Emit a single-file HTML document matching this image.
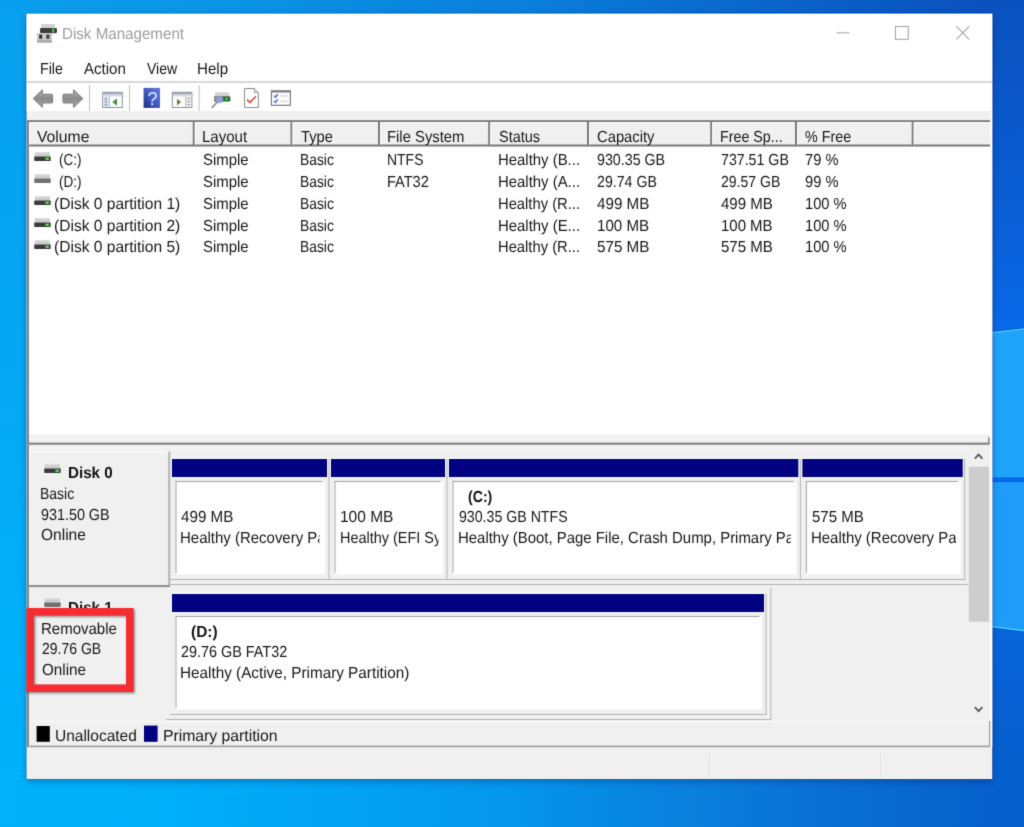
<!DOCTYPE html>
<html lang="en"><head><meta charset="utf-8"><title>Disk Management</title>
<style>
*{box-sizing:border-box;margin:0;padding:0}
html,body{width:1024px;height:827px;overflow:hidden}
body{position:relative;font-family:"Liberation Sans",sans-serif;font-size:16px;color:#161616;background:#0a78d8}
.a,.t{position:absolute}
.t{text-rendering:geometricPrecision;white-space:pre;line-height:18px;height:18px;font-size:16px;transform-origin:0 13px}
.b{font-weight:700}
#app{position:absolute;left:0;top:0;width:1024px;height:827px;filter:url(#soft)}
#win{position:absolute;left:27px;top:14px;width:965px;height:765px;background:#f0f0f0;box-shadow:0 0 0 1px rgba(20,80,150,.28),0 2px 7px rgba(0,30,90,.38)}
</style></head>
<body>
<svg class="a" style="left:0;top:0" width="1024" height="827" viewBox="0 0 1024 827">
<defs>
<linearGradient id="gt" x1="0" y1="0" x2="1" y2="0">
<stop offset="0" stop-color="#0aa0ec"/><stop offset="0.25" stop-color="#0a92e6"/><stop offset="0.5" stop-color="#0a80dc"/><stop offset="0.7" stop-color="#0a6ace"/><stop offset="0.96" stop-color="#0a51be"/><stop offset="1" stop-color="#0a51be"/>
</linearGradient>
<linearGradient id="gb" x1="0" y1="0" x2="1" y2="0">
<stop offset="0" stop-color="#00b2fa"/><stop offset="0.12" stop-color="#00b0f9"/><stop offset="0.3" stop-color="#02a6f4"/><stop offset="0.5" stop-color="#0496ea"/><stop offset="0.7" stop-color="#0a7cda"/><stop offset="0.88" stop-color="#0868ce"/><stop offset="0.97" stop-color="#0660cc"/><stop offset="1" stop-color="#0660cc"/>
</linearGradient>
<linearGradient id="gl" x1="0" y1="0" x2="0" y2="1">
<stop offset="0" stop-color="#08a0ee"/><stop offset="0.5" stop-color="#05a8f3"/><stop offset="0.9" stop-color="#00b1fa"/><stop offset="1" stop-color="#00b2fa"/>
</linearGradient>
<linearGradient id="gr2" x1="0" y1="0" x2="0" y2="1"><stop offset="0" stop-color="#0864dc"/><stop offset="0.5" stop-color="#0760d0"/><stop offset="1" stop-color="#0660cc"/></linearGradient>
<linearGradient id="gr" x1="0" y1="0" x2="0" y2="1">
<stop offset="0" stop-color="#0a51be"/><stop offset="0.6" stop-color="#0a5ed4"/><stop offset="1" stop-color="#0868e8"/>
</linearGradient>
</defs>
<rect width="1024" height="827" fill="#0a80dc"/>
<rect x="0" y="0" width="1024" height="30" fill="url(#gt)"/>
<rect x="0" y="760" width="1024" height="67" fill="url(#gb)"/>
<rect x="0" y="0" width="30" height="780" fill="url(#gl)"/>
<rect x="985" y="0" width="39" height="335" fill="url(#gr)"/>
<polygon points="985,333.6 1024,329 1024,480 985,480" fill="#1fa4fb"/>
<path d="M985 333.6L1024 329" stroke="#3cbcff" stroke-width="1.6" fill="none"/>
<rect x="985" y="477.3" width="39" height="5" fill="#0669ee"/>
<polygon points="985,482.3 1024,482.3 1024,631 985,626" fill="#1f9cf8"/>
<polygon points="985,626 1024,631 1024,827 985,827" fill="url(#gr2)"/>
<path d="M985 625.6L1024 630.6" stroke="#38c0ff" stroke-width="1.6" fill="none"/>
</svg>
<svg width="0" height="0" style="position:absolute"><defs>
<filter id="soft" x="0" y="0" width="100%" height="100%" color-interpolation-filters="sRGB">
<feConvolveMatrix order="3" kernelMatrix="0.0143 0.0910 0.0143 0.0910 0.5785 0.0910 0.0143 0.0910 0.0143" edgeMode="duplicate" preserveAlpha="true"/>
</filter></defs></svg>
<div id="app">
<div id="win"></div>
<svg class="a" style="left:0;top:0" width="1024" height="827" viewBox="0 0 1024 827">
<rect x="26.5" y="13.7" width="965.8" height="765.4" fill="#f0f0f0"/>
<rect x="26.5" y="13.7" width="965.8" height="68" fill="#fff"/>
<rect x="26.5" y="81.3" width="965.8" height="1.5" fill="#c8c8c8"/>
<rect x="26.5" y="82.8" width="965.8" height="28.1" fill="#fff"/>
<rect x="990" y="110.9" width="2.3" height="636" fill="#fbfbfb"/>
<rect x="27" y="120.2" width="963" height="2" fill="#787878"/>
<rect x="27" y="122" width="2" height="322" fill="#858585"/>
<rect x="29" y="146" width="961" height="288" fill="#fff"/>
<rect x="29" y="434" width="961" height="1" fill="#f7f7f7"/>
<rect x="29" y="438" width="959" height="1" fill="#f8f8f8"/>
<rect x="29" y="122" width="961" height="22.5" fill="#f0f0f0"/>
<rect x="29" y="144.5" width="961" height="2" fill="#787878"/>
<rect x="29" y="122.2" width="961" height="1" fill="#fff"/>
<rect x="192.75" y="121" width="2" height="24" fill="#7a7a7a"/>
<rect x="194.75" y="122.2" width="1" height="22.3" fill="#fff"/>
<rect x="290.5" y="121" width="2" height="24" fill="#7a7a7a"/>
<rect x="292.5" y="122.2" width="1" height="22.3" fill="#fff"/>
<rect x="378" y="121" width="2" height="24" fill="#7a7a7a"/>
<rect x="380" y="122.2" width="1" height="22.3" fill="#fff"/>
<rect x="488.25" y="121" width="2" height="24" fill="#7a7a7a"/>
<rect x="490.25" y="122.2" width="1" height="22.3" fill="#fff"/>
<rect x="587" y="121" width="2" height="24" fill="#7a7a7a"/>
<rect x="589" y="122.2" width="1" height="22.3" fill="#fff"/>
<rect x="710.25" y="121" width="2" height="24" fill="#7a7a7a"/>
<rect x="712.25" y="122.2" width="1" height="22.3" fill="#fff"/>
<rect x="795" y="121" width="2" height="24" fill="#7a7a7a"/>
<rect x="797" y="122.2" width="1" height="22.3" fill="#fff"/>
<rect x="911.7" y="121" width="2" height="24" fill="#7a7a7a"/>
<rect x="913.7" y="122.2" width="1" height="22.3" fill="#fff"/>
<rect x="29" y="122.2" width="1" height="22.3" fill="#fff"/>
<rect x="27" y="442.7" width="962.6" height="2" fill="#7c7c7c"/>
<rect x="29" y="447.2" width="939" height="1" fill="#f9f9f9"/>
<rect x="988" y="437.5" width="1.6" height="6" fill="#8a8a8a"/>
<rect x="27" y="444.6" width="2" height="302.5" fill="#858585"/>
<rect x="29" y="451.5" width="139.5" height="1" fill="#fbfbfb"/>
<rect x="29" y="451.5" width="1" height="133.5" fill="#fbfbfb"/>
<rect x="29" y="585.1" width="141" height="2" fill="#8c8c8c"/>
<rect x="168.4" y="452" width="1.5" height="134" fill="#a0a0a0"/>
<rect x="172" y="458" width="155" height="1" fill="#fafafa"/>
<rect x="172" y="459" width="155" height="18" fill="#000080"/>
<rect x="175.5" y="481" width="149.5" height="93.5" fill="#fff"/>
<rect x="175.5" y="481" width="147" height="1" fill="#a4a4a4"/>
<rect x="175.5" y="481" width="1" height="92" fill="#a4a4a4"/>
<rect x="328.5" y="459" width="1" height="120.5" fill="#b2b2b2"/>
<rect x="331" y="458" width="114" height="1" fill="#fafafa"/>
<rect x="331" y="459" width="114" height="18" fill="#000080"/>
<rect x="334.5" y="481" width="108.5" height="93.5" fill="#fff"/>
<rect x="334.5" y="481" width="106" height="1" fill="#a4a4a4"/>
<rect x="334.5" y="481" width="1" height="92" fill="#a4a4a4"/>
<rect x="446.5" y="459" width="1" height="120.5" fill="#b2b2b2"/>
<rect x="449" y="458" width="349.3" height="1" fill="#fafafa"/>
<rect x="449" y="459" width="349.3" height="18" fill="#000080"/>
<rect x="452.5" y="481" width="343.8" height="93.5" fill="#fff"/>
<rect x="452.5" y="481" width="341.3" height="1" fill="#a4a4a4"/>
<rect x="452.5" y="481" width="1" height="92" fill="#a4a4a4"/>
<rect x="799.8" y="459" width="1" height="120.5" fill="#b2b2b2"/>
<rect x="802.4" y="458" width="160.3" height="1" fill="#fafafa"/>
<rect x="802.4" y="459" width="160.3" height="18" fill="#000080"/>
<rect x="805.9" y="481" width="154.8" height="93.5" fill="#fff"/>
<rect x="805.9" y="481" width="152.3" height="1" fill="#a4a4a4"/>
<rect x="805.9" y="481" width="1" height="92" fill="#a4a4a4"/>
<rect x="964.2" y="459" width="1" height="120.5" fill="#b2b2b2"/>
<rect x="169.3" y="451" width="1" height="133.5" fill="#b8b8b8"/>
<rect x="170" y="579" width="795.5" height="1" fill="#b2b2b2"/>
<rect x="170" y="584" width="798" height="1" fill="#b2b2b2"/>
<rect x="172" y="593" width="592" height="1" fill="#fafafa"/>
<rect x="172" y="594" width="592" height="18" fill="#000080"/>
<rect x="175.5" y="616" width="586.5" height="93.5" fill="#fff"/>
<rect x="175.5" y="616" width="584" height="1" fill="#a4a4a4"/>
<rect x="175.5" y="616" width="1" height="92" fill="#a4a4a4"/>
<rect x="765.5" y="594" width="1" height="120.5" fill="#b2b2b2"/>
<rect x="770.3" y="587.5" width="1" height="132.5" fill="#b2b2b2"/>
<rect x="170" y="714" width="596.5" height="1" fill="#b2b2b2"/>
<rect x="166" y="719" width="605.3" height="1" fill="#b2b2b2"/>
<rect x="968.6" y="446" width="21" height="274" fill="#f0f0f0"/>
<rect x="968.8" y="466.8" width="20.2" height="155" fill="#cdcdcd"/>
<rect x="29.6" y="721" width="960" height="1" fill="#fcfcfc"/>
<rect x="29.6" y="745.6" width="960.4" height="1.6" fill="#9c9c9c"/>
<rect x="989" y="721" width="1.2" height="26" fill="#9c9c9c"/>
<rect x="36.6" y="726" width="13.2" height="15.8" fill="#000"/>
<rect x="144" y="725.6" width="13.6" height="16.2" fill="#000080"/>
<rect x="709" y="753" width="1" height="25" fill="#dcdcdc"/>
<rect x="710" y="753" width="1" height="25" fill="#fafafa"/>
<rect x="880.5" y="753" width="1" height="25" fill="#dcdcdc"/>
<rect x="881.5" y="753" width="1" height="25" fill="#fafafa"/>
</svg>
<svg class="a" style="left:36px;top:23px" width="22" height="21" viewBox="0 0 22 21">
<rect x="5" y="1" width="14" height="5" rx="1" fill="#d2d2d2"/>
<rect x="4" y="5" width="17" height="5.2" rx="1.4" fill="#3c3c3c"/>
<rect x="16" y="5.6" width="2.2" height="3.8" fill="#4cc24c"/>
<rect x="1" y="10" width="15" height="9.6" fill="#c9c9c9"/>
<rect x="1" y="17.2" width="15" height="2.4" fill="#a9a9a9"/>
<rect x="3.2" y="11.6" width="3" height="4.2" fill="#333"/>
<rect x="10.4" y="11.6" width="3" height="4.2" fill="#333"/>
</svg>
<div class="t" style="left:62.25px;top:26.30px;transform:scaleX(0.9463);color:#9d9d9d;">Disk Management</div>
<svg class="a" style="left:830px;top:20px" width="150" height="26" viewBox="0 0 150 26" fill="none" stroke="#a6a6a6" stroke-width="1.1">
<path d="M6.5 12.8H19.3"/>
<rect x="65.5" y="6.5" width="12.8" height="12.8"/>
<path d="M126.3 6.4L139.2 19.4M139.2 6.4L126.3 19.4"/>
</svg>
<div class="t" style="left:39.61px;top:60.50px;transform:scaleX(0.8882);">File</div>
<div class="t" style="left:84.00px;top:60.50px;transform:scaleX(0.9387);">Action</div>
<div class="t" style="left:146.60px;top:60.50px;transform:scaleX(0.8784);">View</div>
<div class="t" style="left:196.76px;top:60.50px;transform:scaleX(0.9435);">Help</div>
<svg class="a" style="left:27px;top:83px" width="280" height="29" viewBox="27 83 280 29">
<defs>
<linearGradient id="ga" x1="0" y1="0" x2="0" y2="1"><stop offset="0" stop-color="#b6b6b6"/><stop offset="0.5" stop-color="#8a8a8a"/><stop offset="1" stop-color="#adadad"/></linearGradient>
<linearGradient id="gq" x1="1" y1="0" x2="0" y2="1"><stop offset="0" stop-color="#5a78dc"/><stop offset="0.4" stop-color="#4a64cc"/><stop offset="1" stop-color="#1c2c82"/></linearGradient>
</defs>
<path d="M33.2 98.6L42.4 89.8V94.2H51.6Q52.6 94.2 52.6 95.2V102Q52.6 103 51.6 103H42.4V107.4Z" fill="url(#ga)" stroke="#7c7c7c" stroke-width="1" stroke-linejoin="round"/>
<path d="M82.9 98.6L73.6 89.8V94.2H64Q63 94.2 63 95.2V102Q63 103 64 103H73.6V107.4Z" fill="url(#ga)" stroke="#7c7c7c" stroke-width="1" stroke-linejoin="round"/>
<rect x="89" y="85" width="1" height="26" fill="#bdbdbd"/>
<rect x="129" y="85" width="1" height="26" fill="#bdbdbd"/>
<rect x="198.6" y="85" width="1" height="26" fill="#bdbdbd"/>
<g>
<rect x="102.7" y="92.3" width="19.6" height="15.2" fill="#fbfcfd" stroke="#8a92a2" stroke-width="1"/>
<rect x="103.2" y="92.8" width="18.6" height="1.6" fill="#9aa2b4"/>
<rect x="103.2" y="94.4" width="18.6" height="2" fill="#cfd6e4"/>
<rect x="103.2" y="96.4" width="5.6" height="10.6" fill="#e4e9f2"/>
<rect x="108.8" y="96.4" width="0.9" height="10.6" fill="#a8b0c0"/>
<rect x="104.6" y="97.8" width="2.6" height="1.9" fill="#8ea6cc"/><rect x="104.6" y="100.8" width="2.6" height="1.9" fill="#8ea6cc"/><rect x="104.6" y="103.8" width="2.6" height="1.9" fill="#8ea6cc"/>
<path d="M117 98.4V105.8L112.3 102.1Z" fill="#3f8f40"/>
</g>
<g>
<rect x="143.6" y="87.9" width="16.4" height="20" fill="url(#gq)"/>
<text x="152.6" y="104.8" text-anchor="middle" font-family="Liberation Sans, sans-serif" font-size="18" font-weight="400" fill="#d0dcff" stroke="#d0dcff" stroke-width="0.25">?</text>
</g>
<g>
<rect x="172.3" y="92.3" width="19.6" height="15.2" fill="#fbfcfd" stroke="#8a8e96" stroke-width="1"/>
<rect x="172.8" y="92.8" width="18.6" height="1.6" fill="#9a9ea8"/>
<rect x="172.8" y="94.4" width="18.6" height="2" fill="#d4d7de"/>
<rect x="185.4" y="96.4" width="0.9" height="10.6" fill="#a4a8b0"/>
<rect x="187.4" y="97.8" width="2.8" height="1.7" fill="#a2a6ae"/><rect x="187.4" y="100.8" width="2.8" height="1.7" fill="#a2a6ae"/><rect x="187.4" y="103.8" width="2.8" height="1.7" fill="#a2a6ae"/>
<path d="M177 98.8V105.4L181 102.1Z" fill="#647f2a"/>
</g>
<g>
<rect x="215" y="92.3" width="14.4" height="4.2" fill="#d2d4d2"/>
<rect x="214" y="96.2" width="16.4" height="5.4" rx="0.8" fill="#5c6068"/>
<rect x="214" y="96.2" width="3" height="5.4" fill="#8c8e92"/>
<rect x="223.6" y="96.8" width="6" height="4.2" fill="#1a6e20"/><rect x="225.2" y="97.9" width="2.8" height="2" fill="#58d050"/>
<circle cx="219.6" cy="99.4" r="3.3" fill="#93a8e6" fill-opacity="0.9" stroke="#7e90c8" stroke-width="0.8"/>
<path d="M217 102.4L212.2 107.4" stroke="#8e8e96" stroke-width="1.7" stroke-linecap="round"/>
</g>
<g>
<path d="M244.5 88.5H254.4L258.4 92.5V107.5H244.5Z" fill="#fdfdfd" stroke="#8e8e8e" stroke-width="1"/>
<path d="M254.4 88.5V92.5H258.4" fill="#e2e2e2" stroke="#9a9a9a" stroke-width="0.9"/>
<path d="M247 99.6L249.9 102.4L256 96.4" fill="none" stroke="#d84a42" stroke-width="1.5"/>
</g>
<g>
<rect x="271.4" y="90.9" width="19" height="14.4" fill="#fcfcfd" stroke="#7e7e7e" stroke-width="1.2"/>
<rect x="271.4" y="90.5" width="19" height="2" fill="#7e7e7e"/>
<path d="M274 95.6l1.5 1.6 2.4-3M274 100.8l1.5 1.6 2.4-3" fill="none" stroke="#4a6cd2" stroke-width="1.4"/>
<rect x="280.6" y="95.4" width="7.4" height="1.1" fill="#d0d0d0"/><rect x="280.6" y="100.6" width="7.4" height="1.1" fill="#d0d0d0"/>
</g>
</svg>
<div class="t" style="left:37.00px;top:128.50px;transform:scaleX(0.9819);">Volume</div>
<div class="t" style="left:202.31px;top:128.50px;transform:scaleX(0.9402);">Layout</div>
<div class="t" style="left:301.00px;top:128.50px;transform:scaleX(0.9198);">Type</div>
<div class="t" style="left:386.82px;top:128.50px;transform:scaleX(0.9271);">File System</div>
<div class="t" style="left:498.50px;top:128.50px;transform:scaleX(0.9039);">Status</div>
<div class="t" style="left:597.00px;top:128.50px;transform:scaleX(0.9237);">Capacity</div>
<div class="t" style="left:719.86px;top:128.50px;transform:scaleX(0.8923);">Free Sp...</div>
<div class="t" style="left:805.00px;top:128.50px;transform:scaleX(0.8951);">% Free</div>
<svg class="a" style="left:33.6px;top:152.2px" width="18" height="10" viewBox="0 0 18 10"><rect x="0.8" y="0.2" width="15.2" height="4.6" fill="#cdcdcd"/><rect x="0.8" y="0.2" width="15.2" height="1.4" fill="#dedede"/><rect x="0.2" y="4.5" width="16.5" height="4.5" rx="0.7" fill="#3a3a3a"/><rect x="11.2" y="5.4" width="4" height="2.7" fill="#3fae3f"/><rect x="12.2" y="6" width="2" height="1.5" fill="#7fe070"/></svg>
<div class="t" style="left:59.16px;top:151.80px;transform:scaleX(0.8400);">(C:)</div>
<div class="t" style="left:203.25px;top:151.80px;transform:scaleX(0.9335);">Simple</div>
<div class="t" style="left:300.13px;top:151.80px;transform:scaleX(0.8656);">Basic</div>
<div class="t" style="left:387.13px;top:151.80px;transform:scaleX(0.8728);">NTFS</div>
<div class="t" style="left:497.57px;top:151.80px;transform:scaleX(0.9318);">Healthy (B...</div>
<div class="t" style="left:597.00px;top:151.80px;transform:scaleX(0.8902);">930.35 GB</div>
<div class="t" style="left:720.75px;top:151.80px;transform:scaleX(0.8869);">737.51 GB</div>
<div class="t" style="left:805.00px;top:151.80px;transform:scaleX(0.9174);">79 %</div>
<svg class="a" style="left:33.6px;top:174.1px" width="18" height="10" viewBox="0 0 18 10"><rect x="0.8" y="0.2" width="15.2" height="4.6" fill="#cdcdcd"/><rect x="0.8" y="0.2" width="15.2" height="1.4" fill="#dedede"/><rect x="0.2" y="4.5" width="16.5" height="4.5" rx="0.7" fill="#707070"/></svg>
<div class="t" style="left:59.15px;top:173.70px;transform:scaleX(0.8489);">(D:)</div>
<div class="t" style="left:203.25px;top:173.70px;transform:scaleX(0.9335);">Simple</div>
<div class="t" style="left:300.13px;top:173.70px;transform:scaleX(0.8656);">Basic</div>
<div class="t" style="left:387.09px;top:173.70px;transform:scaleX(0.9102);">FAT32</div>
<div class="t" style="left:497.57px;top:173.70px;transform:scaleX(0.9318);">Healthy (A...</div>
<div class="t" style="left:597.00px;top:173.70px;transform:scaleX(0.8853);">29.74 GB</div>
<div class="t" style="left:720.75px;top:173.70px;transform:scaleX(0.8778);">29.57 GB</div>
<div class="t" style="left:805.00px;top:173.70px;transform:scaleX(0.9174);">99 %</div>
<svg class="a" style="left:33.6px;top:196.0px" width="18" height="10" viewBox="0 0 18 10"><rect x="0.8" y="0.2" width="15.2" height="4.6" fill="#cdcdcd"/><rect x="0.8" y="0.2" width="15.2" height="1.4" fill="#dedede"/><rect x="0.2" y="4.5" width="16.5" height="4.5" rx="0.7" fill="#3a3a3a"/><rect x="11.2" y="5.4" width="4" height="2.7" fill="#3fae3f"/><rect x="12.2" y="6" width="2" height="1.5" fill="#7fe070"/></svg>
<div class="t" style="left:54.23px;top:195.60px;transform:scaleX(0.9728);">(Disk 0 partition 1)</div>
<div class="t" style="left:203.25px;top:195.60px;transform:scaleX(0.9335);">Simple</div>
<div class="t" style="left:300.13px;top:195.60px;transform:scaleX(0.8656);">Basic</div>
<div class="t" style="left:497.58px;top:195.60px;transform:scaleX(0.9223);">Healthy (R...</div>
<div class="t" style="left:597.00px;top:195.60px;transform:scaleX(0.9501);">499 MB</div>
<div class="t" style="left:720.75px;top:195.60px;transform:scaleX(0.9409);">499 MB</div>
<div class="t" style="left:805.33px;top:195.60px;transform:scaleX(0.9175);">100 %</div>
<svg class="a" style="left:33.6px;top:217.9px" width="18" height="10" viewBox="0 0 18 10"><rect x="0.8" y="0.2" width="15.2" height="4.6" fill="#cdcdcd"/><rect x="0.8" y="0.2" width="15.2" height="1.4" fill="#dedede"/><rect x="0.2" y="4.5" width="16.5" height="4.5" rx="0.7" fill="#3a3a3a"/><rect x="11.2" y="5.4" width="4" height="2.7" fill="#3fae3f"/><rect x="12.2" y="6" width="2" height="1.5" fill="#7fe070"/></svg>
<div class="t" style="left:54.23px;top:217.50px;transform:scaleX(0.9728);">(Disk 0 partition 2)</div>
<div class="t" style="left:203.25px;top:217.50px;transform:scaleX(0.9335);">Simple</div>
<div class="t" style="left:300.13px;top:217.50px;transform:scaleX(0.8656);">Basic</div>
<div class="t" style="left:497.57px;top:217.50px;transform:scaleX(0.9318);">Healthy (E...</div>
<div class="t" style="left:597.31px;top:217.50px;transform:scaleX(0.9445);">100 MB</div>
<div class="t" style="left:721.06px;top:217.50px;transform:scaleX(0.9351);">100 MB</div>
<div class="t" style="left:805.33px;top:217.50px;transform:scaleX(0.9175);">100 %</div>
<svg class="a" style="left:33.6px;top:239.8px" width="18" height="10" viewBox="0 0 18 10"><rect x="0.8" y="0.2" width="15.2" height="4.6" fill="#cdcdcd"/><rect x="0.8" y="0.2" width="15.2" height="1.4" fill="#dedede"/><rect x="0.2" y="4.5" width="16.5" height="4.5" rx="0.7" fill="#3a3a3a"/><rect x="11.2" y="5.4" width="4" height="2.7" fill="#3fae3f"/><rect x="12.2" y="6" width="2" height="1.5" fill="#7fe070"/></svg>
<div class="t" style="left:54.23px;top:239.40px;transform:scaleX(0.9728);">(Disk 0 partition 5)</div>
<div class="t" style="left:203.25px;top:239.40px;transform:scaleX(0.9335);">Simple</div>
<div class="t" style="left:300.13px;top:239.40px;transform:scaleX(0.8656);">Basic</div>
<div class="t" style="left:497.58px;top:239.40px;transform:scaleX(0.9223);">Healthy (R...</div>
<div class="t" style="left:597.00px;top:239.40px;transform:scaleX(0.9501);">575 MB</div>
<div class="t" style="left:720.75px;top:239.40px;transform:scaleX(0.9409);">575 MB</div>
<div class="t" style="left:805.33px;top:239.40px;transform:scaleX(0.9175);">100 %</div>
<svg class="a" style="left:43.6px;top:463.6px" width="18" height="10" viewBox="0 0 18 10"><rect x="0.8" y="0.2" width="15.2" height="4.6" fill="#cdcdcd"/><rect x="0.8" y="0.2" width="15.2" height="1.4" fill="#dedede"/><rect x="0.2" y="4.5" width="16.5" height="4.5" rx="0.7" fill="#3a3a3a"/><rect x="11.2" y="5.4" width="4" height="2.7" fill="#3fae3f"/><rect x="12.2" y="6" width="2" height="1.5" fill="#7fe070"/></svg>
<div class="t b" style="left:67.80px;top:465.25px;transform:scaleX(0.9461);color:#111;">Disk 0</div>
<div class="t" style="left:40.38px;top:485.75px;transform:scaleX(0.8721);">Basic</div>
<div class="t" style="left:41.25px;top:506.50px;transform:scaleX(0.8968);">931.50 GB</div>
<div class="t" style="left:41.25px;top:527.00px;transform:scaleX(0.9708);">Online</div>
<svg class="a" style="left:43.6px;top:598px" width="18" height="10" viewBox="0 0 18 10"><rect x="0.8" y="0.2" width="15.2" height="4.6" fill="#cdcdcd"/><rect x="0.8" y="0.2" width="15.2" height="1.4" fill="#dedede"/><rect x="0.2" y="4.5" width="16.5" height="4.5" rx="0.7" fill="#707070"/></svg>
<div class="t b" style="left:67.80px;top:600.00px;transform:scaleX(0.9461);color:#111;">Disk 1</div>
<div class="t" style="left:40.56px;top:620.50px;transform:scaleX(0.9371);">Removable</div>
<div class="t" style="left:41.50px;top:641.10px;transform:scaleX(0.8741);">29.76 GB</div>
<div class="t" style="left:41.50px;top:661.50px;transform:scaleX(0.9514);">Online</div>
<div class="t" style="left:181.25px;top:508.70px;transform:scaleX(0.9501);">499 MB</div>
<div class="t" style="left:180.31px;top:529.50px;transform:scaleX(0.9359);width:148.82px;overflow:hidden;">Healthy (Recovery Partition)</div>
<div class="t" style="left:339.53px;top:508.70px;transform:scaleX(0.9688);">100 MB</div>
<div class="t" style="left:339.60px;top:529.50px;transform:scaleX(0.9027);width:109.34px;overflow:hidden;">Healthy (EFI System Partition)</div>
<div class="t b" style="left:468.00px;top:489.00px;transform:scaleX(0.8820);color:#111;">(C:)</div>
<div class="t" style="left:458.75px;top:509.00px;transform:scaleX(0.8849);">930.35 GB NTFS</div>
<div class="t" style="left:457.82px;top:529.50px;transform:scaleX(0.9330);width:357.31px;overflow:hidden;">Healthy (Boot, Page File, Crash Dump, Primary Partition)</div>
<div class="t" style="left:812.00px;top:508.70px;transform:scaleX(0.9400);">575 MB</div>
<div class="t" style="left:811.07px;top:529.50px;transform:scaleX(0.9349);width:154.82px;overflow:hidden;">Healthy (Recovery Partition)</div>
<div class="t b" style="left:190.50px;top:624.00px;transform:scaleX(0.9647);color:#111;">(D:)</div>
<div class="t" style="left:181.25px;top:644.00px;transform:scaleX(0.8997);">29.76 GB FAT32</div>
<div class="t" style="left:180.29px;top:664.60px;transform:scaleX(0.9550);">Healthy (Active, Primary Partition)</div>
<svg class="a" style="left:968px;top:448px" width="22" height="272" viewBox="0 0 22 272" fill="none" stroke="#555" stroke-width="1.7">
<path d="M6.8 10.6L10.6 6.6L14.4 10.6"/><path d="M6.8 259.2L10.6 263.2L14.4 259.2"/></svg>
<svg class="a" style="left:20px;top:600px" width="124" height="102" viewBox="20 600 124 102" fill="none">
<defs><filter id="rs" x="-10%" y="-10%" width="125%" height="125%"><feGaussianBlur stdDeviation="1"/></filter></defs>
<rect x="31.6" y="613.2" width="99.6" height="76.4" stroke="#000" stroke-opacity="0.42" stroke-width="7.5" filter="url(#rs)"/>
<rect x="30.2" y="611.8" width="99.6" height="76.4" stroke="#f52c32" stroke-width="7.6"/>
</svg>
<div class="t" style="left:55.33px;top:727.50px;transform:scaleX(0.9685);">Unallocated</div>
<div class="t" style="left:163.27px;top:727.50px;transform:scaleX(0.9840);">Primary partition</div>
</div>
</body></html>
